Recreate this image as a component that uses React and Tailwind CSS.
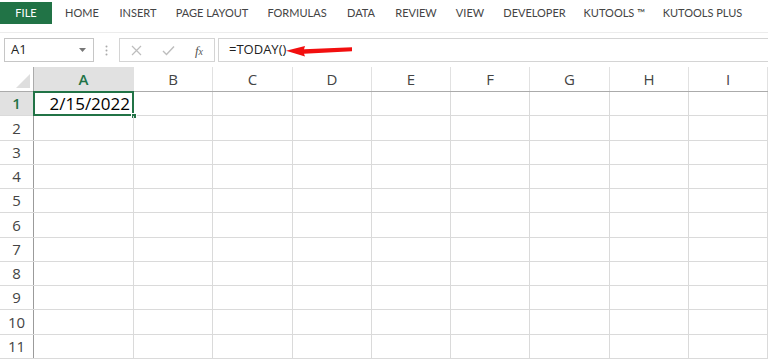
import React from 'react';

const tabs = [
  { label: 'HOME', width: 'w-[56px]' },
  { label: 'INSERT', width: 'w-[56px]' },
  { label: 'PAGE LAYOUT', width: 'w-[92px]' },
  { label: 'FORMULAS', width: 'w-[78px]' },
  { label: 'DATA', width: 'w-[50px]' },
  { label: 'REVIEW', width: 'w-[60px]' },
  { label: 'VIEW', width: 'w-[48px]' },
  { label: 'DEVELOPER', width: 'w-[81px]' },
  { label: 'KUTOOLS ™', width: 'w-[79px]' },
  { label: 'KUTOOLS PLUS', width: 'w-[97px]' },
];

const columns = [
  { name: 'A', width: 'w-[100px]' },
  { name: 'B', width: 'w-[79px]' },
  { name: 'C', width: 'w-[80px]' },
  { name: 'D', width: 'w-[79px]' },
  { name: 'E', width: 'w-[79px]' },
  { name: 'F', width: 'w-[79px]' },
  { name: 'G', width: 'w-[80px]' },
  { name: 'H', width: 'w-[79px]' },
  { name: 'I', width: 'w-[79px]' },
];

const rows = [1, 2, 3, 4, 5, 6, 7, 8, 9, 10, 11];

const App = () => {
  return (
    <div className="relative w-[768px] h-[362px] overflow-hidden bg-white font-['Open_Sans',sans-serif] text-[#444]">
      {/* Ribbon tabs */}
      <div className="flex items-start h-[33px] pt-[2px] border-b border-[#ececec]">
        <div className="w-[52px] h-[22px] bg-[#217346] text-white text-[11px] flex items-center justify-center font-['Lato',sans-serif]">
          FILE
        </div>
        <nav className="flex items-center h-[22px] ml-[2px] text-[11px] text-[#444] font-['Lato',sans-serif]">
          {tabs.map((tab) => (
            <span key={tab.label} className={`${tab.width} text-center whitespace-nowrap`}>
              {tab.label}
            </span>
          ))}
        </nav>
      </div>

      {/* Formula bar */}
      <div className="flex items-stretch h-[24px] mt-[5px]">
        <div className="ml-[4px] w-[90px] border border-[#c6c6c6] flex items-center justify-between pl-[6px] pr-[7px] text-[13px] text-[#222]">
          <span>A1</span>
          <svg width="7" height="4" viewBox="0 0 7 4">
            <path d="M0 0 L7 0 L3.5 4 Z" fill="#777" />
          </svg>
        </div>
        <div className="w-[25px] flex items-center justify-center">
          <svg width="3" height="11" viewBox="0 0 3 11">
            <circle cx="1.5" cy="1.5" r="1" fill="#aaa" />
            <circle cx="1.5" cy="5.5" r="1" fill="#aaa" />
            <circle cx="1.5" cy="9.5" r="1" fill="#aaa" />
          </svg>
        </div>
        <div className="w-[96px] border border-[#d4d4d4] flex items-center justify-between px-[11px]">
          <svg width="11" height="11" viewBox="0 0 11 11">
            <path d="M1 1 L10 10 M10 1 L1 10" stroke="#bdbdbd" strokeWidth="1.2" />
          </svg>
          <svg width="13" height="11" viewBox="0 0 13 11">
            <path d="M1 6 L4.5 9.5 L12 1.5" stroke="#bdbdbd" strokeWidth="1.4" fill="none" />
          </svg>
          <span className="font-['Liberation_Serif',serif] italic text-[13px] text-[#555] leading-none">
            f<span className="text-[10px]">x</span>
          </span>
        </div>
        <div className="flex-1 ml-[3px] border-t border-b border-l border-[#d4d4d4] flex items-center pl-[10px] text-[13px] text-[#222]">
          =TODAY()
        </div>
      </div>

      {/* Grid */}
      <div className="mt-[5px]">
        <div className="flex h-[25px] border-b border-[#ababab]">
          <div className="relative w-[34px] border-r border-[#ababab] bg-white">
            <svg className="absolute right-[3px] bottom-[3px]" width="14" height="14" viewBox="0 0 14 14">
              <path d="M14 0 L14 14 L0 14 Z" fill="#dedede" />
            </svg>
          </div>
          {columns.map((col) => (
            <div
              key={col.name}
              className={`${col.width} flex items-center justify-center border-r border-[#e1e1e1] text-[15px] ${
                col.name === 'A' ? 'bg-[#e1e1e1] text-[#217346] font-semibold' : 'text-[#444]'
              }`}
            >
              {col.name}
            </div>
          ))}
        </div>

        {rows.map((row) => (
          <div key={row} className="flex h-[24.25px] border-b border-[#dadada]">
            <div
              className={`w-[34px] border-r border-[#9b9b9b] flex items-center justify-center text-[15px] ${
                row === 1 ? 'bg-[#e1e1e1] text-[#217346] font-semibold' : 'text-[#444]'
              }`}
            >
              {row}
            </div>
            {columns.map((col) => (
              <div key={col.name} className={`relative ${col.width} border-r border-[#dadada]`}>
                {row === 1 && col.name === 'A' && (
                  <>
                    <div className="absolute inset-0 flex items-center justify-end pr-[3px] text-[17px] text-black">
                      2/15/2022
                    </div>
                    <div className="absolute -left-[1px] -top-[1px] -right-[1px] -bottom-[1px] border-2 border-[#217346]" />
                    <div className="absolute -right-[4px] -bottom-[4px] w-[6px] h-[6px] bg-[#217346] border border-white" />
                  </>
                )}
              </div>
            ))}
          </div>
        ))}
      </div>

      {/* Red arrow pointing at the formula */}
      <svg className="absolute left-[285px] top-[42px]" width="70" height="18" viewBox="0 0 70 18">
        <path d="M1 8.7 L20 4 L19 7.2 L67 5.3 L67 9.3 L19 11.8 L20 14.5 Z" fill="#f20f0f" />
      </svg>
    </div>
  );
};

export default App;
